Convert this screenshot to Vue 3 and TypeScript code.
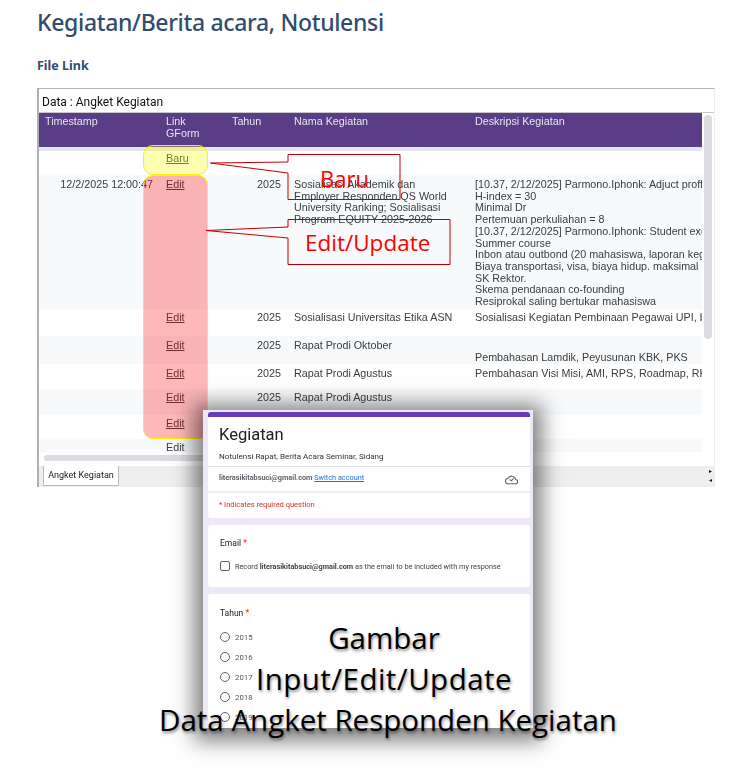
<script setup lang="ts">
interface Row { h: number; pad: number; ts: string; link: string; plain?: boolean; year: string; name: string[]; desc: string[] }
const rows: Row[] = [
  { h: 24, pad: 2, ts: '', link: 'Baru', year: '', name: [], desc: [] },
  { h: 134, pad: 4, ts: '12/2/2025 12:00:47', link: 'Edit', year: '2025',
    name: ['Sosialisasi Akademik dan', 'Employer Responden QS World', 'University Ranking; Sosialisasi', 'Program EQUITY 2025-2026'],
    desc: ['[10.37, 2/12/2025] Parmono.Iphonk: Adjuct proffesor', 'H-index = 30', 'Minimal Dr', 'Pertemuan perkuliahan = 8', '[10.37, 2/12/2025] Parmono.Iphonk: Student exchange', 'Summer course', 'Inbon atau outbond (20 mahasiswa, laporan kegiatan)', 'Biaya transportasi, visa, biaya hidup. maksimal 20 juta', 'SK Rektor.', 'Skema pendanaan co-founding', 'Resiprokal saling bertukar mahasiswa'] },
  { h: 27, pad: 3, ts: '', link: 'Edit', year: '2025', name: ['Sosialisasi Universitas Etika ASN'], desc: ['Sosialisasi Kegiatan Pembinaan Pegawai UPI, bersama'] },
  { h: 28, pad: 4, ts: '', link: 'Edit', year: '2025', name: ['Rapat Prodi Oktober'], desc: ['\u00a0', 'Pembahasan Lamdik, Peyusunan KBK, PKS'] },
  { h: 25, pad: 4, ts: '', link: 'Edit', year: '2025', name: ['Rapat Prodi Agustus'], desc: ['Pembahasan Visi Misi, AMI, RPS, Roadmap, RKT dan'] },
  { h: 26, pad: 3, ts: '', link: 'Edit', year: '2025', name: ['Rapat Prodi Agustus'], desc: [] },
  { h: 24, pad: 3, ts: '', link: 'Edit', year: '', name: [], desc: [] },
  { h: 13, pad: 3, ts: '', link: 'Edit', plain: true, year: '', name: [], desc: [] },
]
const years = ['2015', '2016', '2017', '2018', '2019']
</script>

<template>
  <main class="page">
    <h1 class="title">Kegiatan/Berita acara, Notulensi</h1>
    <h2 class="sub">File Link</h2>

    <section class="sheet">
      <div class="sheet-title">Data : Angket Kegiatan</div>
      <div class="sheet-body">
        <div class="table">
          <div class="head">
            <div class="c c-ts">Timestamp</div>
            <div class="c c-link">Link<br />GForm</div>
            <div class="c c-year-h">Tahun</div>
            <div class="c c-name">Nama Kegiatan</div>
            <div class="c c-desc">Deskripsi Kegiatan</div>
          </div>
          <div class="strip"></div>
          <div v-for="(r, i) in rows" :key="i" class="row" :style="{ height: r.h + 'px', paddingTop: r.pad + 'px' }">
            <div class="c c-ts right">{{ r.ts }}</div>
            <div class="c c-link"><span :class="r.plain ? 'plain' : 'lnk'">{{ r.link }}</span></div>
            <div class="c c-year right">{{ r.year }}</div>
            <div class="c c-name"><div v-for="n in r.name" :key="n">{{ n }}</div></div>
            <div class="c c-desc"><div v-for="(d, j) in r.desc" :key="j" class="nw">{{ d }}</div></div>
          </div>
        </div>
        <div class="vbar"></div>
      </div>
      <div class="hbar-wrap"><div class="hbar"></div></div>
      <div class="tabs">
        <div class="tab">Angket Kegiatan</div>
        <div class="arrows"><span>▸</span><span>◂</span></div>
      </div>
    </section>

    <div class="mark mark-new"></div>
    <div class="mark mark-edit"></div>

    <svg class="callouts" width="738" height="300" viewBox="0 0 738 300">
      <path d="M288 154.500H400V199.500H288V173L210.500 163L288 162Z" fill="none" stroke="#c00000" stroke-width="1" />
      <path d="M288 219.500H450V264.500H288V238L206 230.500L288 227Z" fill="none" stroke="#c00000" stroke-width="1" />
    </svg>
    <div class="lbl lbl-new">Baru</div>
    <div class="lbl lbl-edit">Edit/Update</div>

    <aside class="form">
      <div class="card card-head">
        <div class="fh-top">
          <div class="f-title">Kegiatan</div>
          <div class="f-desc">Notulensi Rapat, Berita Acara Seminar, Sidang</div>
        </div>
        <div class="fh-acct">
          <span><b>literasikitabsuci@gmail.com</b> <a class="sw">Switch account</a></span>
          <svg class="cloud" width="13" height="11" viewBox="0 0 24 20" fill="none" stroke="#5f6368" stroke-width="2">
            <path d="M6 18h13a4 4 0 0 0 .6-8A7.500 7.500 0 0 0 5.500 8 5 5 0 0 0 6 18Z" />
            <path d="M9 10l2.500 2.500L16 8" />
          </svg>
        </div>
        <div class="fh-req">* Indicates required question</div>
      </div>

      <div class="card card-email">
        <div class="q">Email <i>*</i></div>
        <div class="chk-row">
          <span class="chk"></span>
          <span>Record <b>literasikitabsuci@gmail.com</b> as the email to be included with my response</span>
        </div>
      </div>

      <div class="card card-year">
        <div class="q q-small">Tahun <i>*</i></div>
        <div v-for="y in years" :key="y" class="radio-row">
          <span class="radio"></span><span>{{ y }}</span>
        </div>
      </div>
    </aside>

    <div class="caption">
      <div>Gambar</div>
      <div class="cap-mid">Input/Edit/Update</div>
      <div class="cap-last">Data Angket Responden Kegiatan</div>
    </div>
  </main>
</template>

<style>
html, body { margin: 0; background: #fff; overflow: hidden; }
</style>

<style scoped>
.page { position: relative; width: 738px; height: 768px; overflow: hidden; padding: 8px 0 0 37px; box-sizing: border-box; background: #fff; }
.title { margin: 0; font: 500 23px/28px "Noto Sans", sans-serif; color: #2f4d6e; letter-spacing: -.33px; }
.sub { margin: 21px 0 0; font: 700 12.500px/18px "Noto Sans", sans-serif; color: #2f4d6e; }
.sheet { width: 678px; height: 399px; margin-top: 13px; box-sizing: border-box; border-top: 1px solid #b5b5b5; border-left: 2px solid #b0b0b0; border-right: 1px solid #eee; font: 10.750px/11.700px "Liberation Sans", sans-serif; color: #3c4043; filter: blur(.25px); display: flex; flex-direction: column; }
.sheet-title { height: 23px; border-bottom: 1px solid #c8c8c8; box-sizing: content-box; padding-left: 3px; font: 12px/26px "Roboto", sans-serif; color: #111; }
.sheet-body { position: relative; height: 339px; overflow: hidden; display: flex; }
.table { width: 663px; overflow: hidden; }
.head { display: flex; height: 34px; background: #5a3d87; color: #e8e4f0; padding-top: 3px; box-sizing: border-box; }
.strip { height: 4px; background: #e3e6ee; }
.row { display: flex; box-sizing: border-box; overflow: hidden; }
.row:nth-of-type(even) { background: #f8f9fa; }
.c { box-sizing: border-box; padding: 0 6px; flex: none; overflow: hidden; }
.c-ts { width: 121px; padding: 0 7px 0 6px; }
.c-link { width: 66px; padding-left: 6px; padding-right: 0; }
.c-year-h { width: 62px; padding-left: 6px; }
.c-year { width: 61px; padding: 0 6px 0 0; margin-right: 1px; }
.c-name { width: 181px; padding-left: 6px; white-space: nowrap; }
.c-desc { width: 233px; padding-left: 6px; padding-right: 0; }
.right { text-align: right; }
.nw { white-space: nowrap; }
.lnk { text-decoration: underline; color: #3c4043; }
.plain { color: #3c4043; }
.vbar { position: absolute; left: 665px; top: 2px; width: 8px; height: 224px; border-radius: 4px; background: #dadce0; }
.hbar-wrap { height: 14px; padding-top: 3px; box-sizing: border-box; }
.hbar { margin-left: 5px; width: 300px; height: 6px; border-radius: 3px; background: #dadce0; }
.tabs { flex: 1; background: #eee; display: flex; justify-content: space-between; padding-left: 4px; }
.tab { width: 76px; height: 20px; background: #fff; border: 1px solid #bbb; border-top: 0; box-sizing: border-box; font: 9px/19px "Roboto", sans-serif; color: #222; text-align: center; }
.arrows { display: flex; flex-direction: column; font-size: 6px; line-height: 9px; margin: 1px 2px 0 0; color: #111; }
.mark { position: absolute; box-sizing: border-box; border: 1px solid #ffef00; border-radius: 10px; }
.mark-new { left: 143px; top: 145px; width: 65px; height: 30px; background: rgba(255, 255, 0, .3); }
.mark-edit { left: 143px; top: 175px; width: 65px; height: 264px; background: rgba(255, 0, 0, .28); }
.callouts { position: absolute; left: 0; top: 0; pointer-events: none; }
.lbl { position: absolute; color: #f00; font: 22.500px/28px "Open Sans", sans-serif; white-space: nowrap; }
.lbl-new { left: 320px; top: 164px; font-size: 22px; }
.lbl-edit { left: 305px; top: 229px; }
.form { position: absolute; left: 203px; top: 410px; width: 330px; height: 318px; box-sizing: border-box; background: #ede7f6; padding: 2px 3px 0 5px; overflow: hidden; box-shadow: 0 4px 20px 9px rgba(0, 0, 0, .5); filter: blur(.25px); font-family: "Roboto", sans-serif; color: #3c4043; }
.card { background: #fff; border-radius: 3px; overflow: hidden; margin-bottom: 7px; box-sizing: border-box; }
.card-head { height: 106px; border-top: 5px solid #673ab7; border-radius: 3px; }
.fh-top { height: 50px; padding: 6px 12px 0 11px; box-sizing: border-box; border-bottom: 1px solid #e3e3e3; }
.f-title { font-size: 16.500px; line-height: 24px; color: #202124; }
.f-desc { font-size: 8.100px; line-height: 12px; margin-top: 3px; color: #333; }
.fh-acct { height: 26px; padding: 5px 12px 0 11px; box-sizing: border-box; display: flex; justify-content: space-between; border-bottom: 2px solid #efefef; font-size: 7.300px; line-height: 12px; color: #5f6368; }
.sw { color: #1a73e8; text-decoration: underline; }
.cloud { margin-top: 2px; }
.fh-req { padding: 6px 11px; font-size: 7.500px; line-height: 12px; color: #d93025; }
.card-email { height: 62px; padding: 12px 11px 0 12px; }
.q { font-size: 8.500px; line-height: 12px; color: #202124; }
.q i { font-style: normal; color: #d93025; }
.chk-row { margin-top: 12px; display: flex; align-items: center; gap: 5px; font-size: 7.300px; color: #444; }
.chk { width: 10px; height: 10px; box-sizing: border-box; border: 1.500px solid #5f6368; border-radius: 2px; flex: none; }
.card-year { height: 200px; padding: 13px 11px 0 12px; margin: 0; }
.q-small { font-size: 8.500px; margin-bottom: 8px; }
.radio-row { display: flex; align-items: center; height: 20px; gap: 5px; font-size: 7.800px; color: #555; }
.radio { width: 10px; height: 10px; box-sizing: border-box; border: 1px solid #5f6368; border-radius: 50%; flex: none; }
.caption { position: absolute; left: 0; top: 617px; width: 768px; text-align: center; font: 29.500px/41px "Open Sans", sans-serif; color: #000; text-shadow: 1px 2px 3px rgba(0, 0, 0, .45); white-space: nowrap; }
.cap-mid { letter-spacing: .47px; }
.cap-last { padding-left: 8px; }
</style>
